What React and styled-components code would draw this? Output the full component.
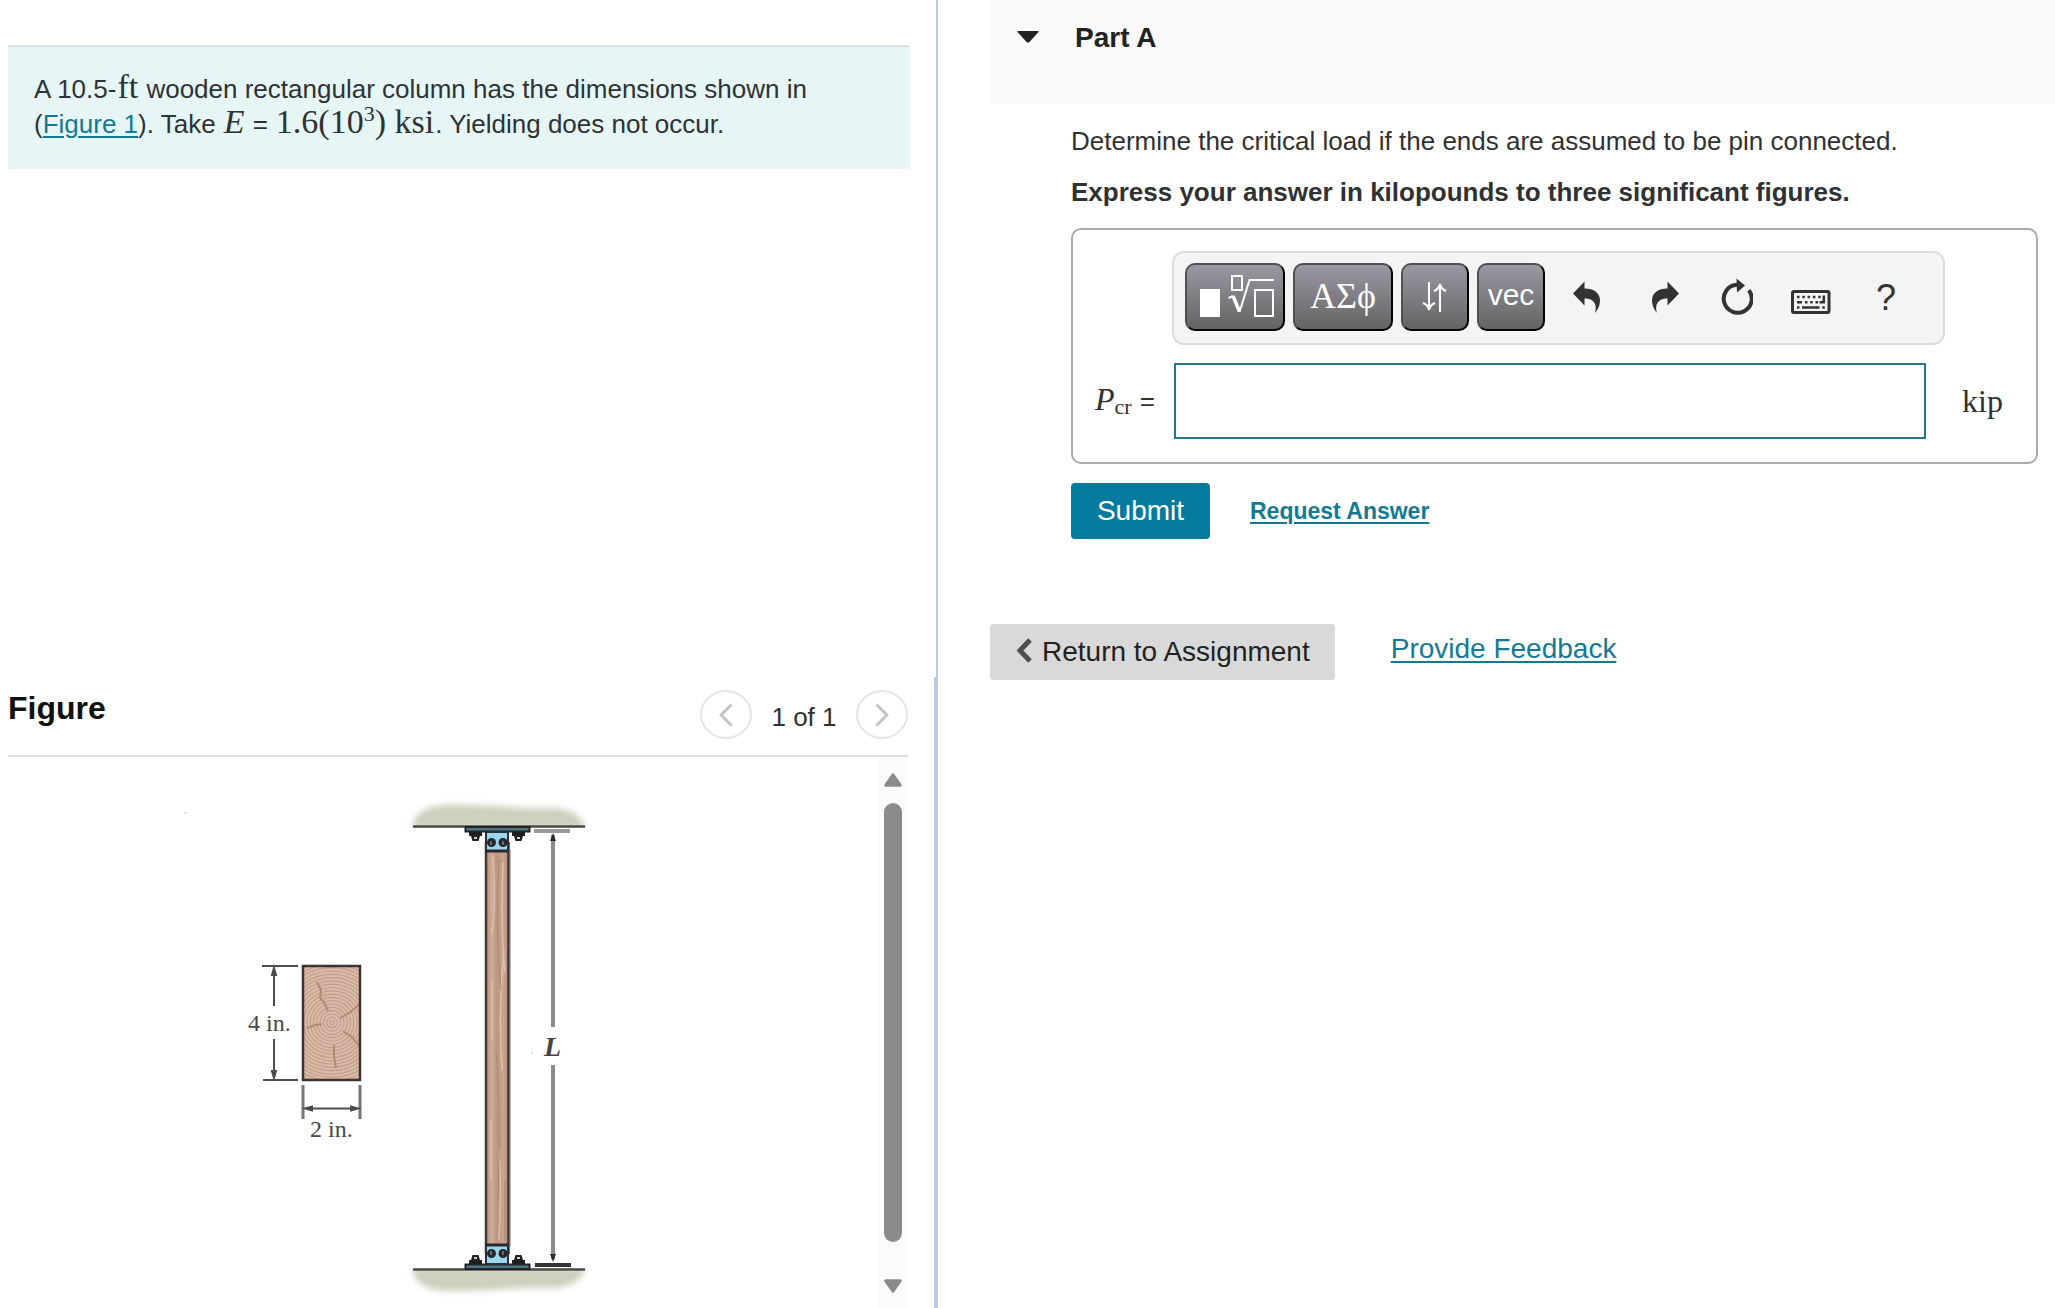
import React from "react";
import styled, { createGlobalStyle } from "styled-components";

const sans = `"Liberation Sans", Arial, Helvetica, sans-serif`;
const serif = `"Liberation Serif", "Times New Roman", serif`;

const GlobalStyle = createGlobalStyle`
  *, *::before, *::after { box-sizing: border-box; }
  body {
    margin: 0;
    background: #fff;
    color: #2f3234;
    font-family: ${sans};
    font-size: 26px;
    line-height: 35px;
  }
  p, h1, h2 { margin: 0; }
  button, input { font: inherit; color: inherit; }
  button { cursor: pointer; }
`;

const Page = styled.div`
  display: grid;
  grid-template-columns: minmax(0, 938fr) minmax(0, 1117fr);
  min-height: 100vh;
`;

const LeftPane = styled.div`
  display: grid;
  grid-template-rows: minmax(0, 677fr) minmax(0, 631fr);
  height: 100vh;
`;

const ProblemPane = styled.section`
  min-height: 0;
  padding: 45px 26px 0 8px;
  border-right: 2px solid #bccbdb;
`;

const FigurePane = styled.section`
  min-height: 0;
  display: flex;
  flex-direction: column;
  padding: 0 26px 0 8px;
  border-right: 4px solid #bccbdb;
`;

const Intro = styled.div`
  padding: 25px 80px 27px 26px;
  border-top: 2px solid #dbe0e0;
  background: #e6f6f6;
`;

const Link = styled.a`
  color: #147a94;
  font-size: ${(p) => p.$size || 26}px;
  font-weight: ${(p) => (p.$bold ? 700 : 400)};
  line-height: 32px;
  text-decoration: underline;
  text-decoration-thickness: 2px;
  text-underline-offset: 3px;
`;

const MathText = styled.span`
  margin: 0 1px;
  font-family: ${serif};
  font-size: ${(p) => (p.$large ? 34 : 32)}px;
  line-height: 0;
  white-space: nowrap;
`;

const Superscript = styled.sup`
  font-size: 22px;
  line-height: 0;
  vertical-align: 12px;
`;

const Subscript = styled.sub`
  font-size: 22px;
  line-height: 0;
  vertical-align: -4px;
`;

const Equals = styled.span`
  font-family: ${sans};
  font-size: 26px;
  margin: 0 8px;
`;

const FigureHeader = styled.header`
  display: flex;
  justify-content: space-between;
  align-items: flex-start;
  height: 80px;
  flex: none;
  padding-top: 13px;
  border-bottom: 2px solid #dddfdf;
`;

const FigureTitle = styled.h2`
  color: #111;
  font-size: 32px;
  line-height: 37px;
`;

const Pager = styled.div`
  display: flex;
  align-items: center;
`;

const PagerButton = styled.button`
  display: grid;
  place-items: center;
  width: 52px;
  height: 49px;
  padding: 0;
  border: 2px solid #e6e6e6;
  border-radius: 50%;
  background: #fff;
`;

const PagerCount = styled.span`
  padding-top: 6px;
  width: 104px;
  text-align: center;
`;

const FigureBody = styled.div`
  flex: 1;
  min-height: 0;
  display: flex;
`;

const Drawing = styled.svg`
  flex: 1;
  min-width: 0;
  height: 100%;
`;

const ScrollTrack = styled.div`
  width: 30px;
  display: flex;
  flex-direction: column;
  align-items: center;
  gap: 16px;
  padding: 16px 0 15px;
  background: #fbfbfb;
`;

const ScrollThumb = styled.div`
  flex: 1;
  width: 18px;
  margin-bottom: 21px;
  border-radius: 9px;
  background: #8b8b8b;
`;

const RightPane = styled.main`
  padding-left: 52px;
`;

const PartHeader = styled.header`
  display: flex;
  align-items: flex-start;
  gap: 36px;
  height: 104px;
  padding: 22px 0 0 27px;
  background: #f9f9f9;
`;

const CollapseButton = styled.button`
  display: flex;
  align-items: center;
  height: 30px;
  padding: 0;
  border: 0;
  background: none;
`;

const PartTitle = styled.h1`
  color: #222;
  font-size: 28px;
  line-height: 32px;
`;

const PartBody = styled.div`
  padding: 20px 17px 0 81px;
`;

const Instruction = styled.p`
  margin: 16px 0 18px;
  font-weight: 700;
`;

const AnswerBox = styled.div`
  padding: 21px 0 23px;
  border: 2px solid #aaa;
  border-radius: 10px;
`;

const Toolbar = styled.div`
  display: flex;
  align-items: center;
  margin: 0 91px 18px 99px;
  padding: 10px 11px 12px;
  border: 2px solid #dcdcdc;
  border-radius: 12px;
  background: #f4f4f4;
`;

const PaletteGroup = styled.div`
  display: flex;
  gap: 8px;
`;

const paletteKinds = {
  icon: { family: sans, size: 30, lift: 0 },
  greek: { family: serif, size: 36, lift: 2 },
  text: { family: sans, size: 30, lift: 6 },
};

const PaletteButton = styled.button`
  display: grid;
  place-items: center;
  width: ${(p) => (p.$wide ? 100 : 68)}px;
  height: 68px;
  padding: 0 0 ${(p) => paletteKinds[p.$kind].lift}px;
  border: 2px solid;
  border-color: #505050 #000 #000 #505050;
  border-radius: 10px;
  background: linear-gradient(#9a98a3, #636363);
  color: #fff;
  font-family: ${(p) => paletteKinds[p.$kind].family};
  font-size: ${(p) => paletteKinds[p.$kind].size}px;
`;

const ToolButton = styled.button`
  display: grid;
  place-items: center;
  width: ${(p) => p.$width}px;
  height: 68px;
  padding: 0;
  border: 0;
  background: none;
  color: #333;
  font-size: 36px;
`;

const AnswerRow = styled.div`
  display: flex;
  align-items: center;
  padding-right: 32px;
`;

const AnswerLabel = styled.label`
  width: 101px;
  padding-left: 21px;
  flex: none;
`;

const AnswerInput = styled.input`
  flex: 1;
  min-width: 0;
  height: 76px;
  margin-right: 35px;
  padding: 0 12px;
  border: 2px solid #22788e;
  border-radius: 0;
  background: #fff;
  outline: none;
`;

const SubmitRow = styled.div`
  display: flex;
  align-items: center;
  gap: 40px;
  margin-top: 19px;
`;

const SubmitButton = styled.button`
  width: 139px;
  height: 56px;
  padding: 0;
  border: 0;
  border-radius: 4px;
  background: #047a9c;
  color: #fff;
  font-size: 28px;
  line-height: 32px;
`;

const FooterRow = styled.footer`
  display: flex;
  align-items: flex-start;
  gap: 56px;
  margin-top: 85px;
`;

const ReturnButton = styled.button`
  display: flex;
  align-items: center;
  gap: 10px;
  height: 56px;
  padding: 0 25px 0 26px;
  border: 0;
  border-radius: 4px;
  background: #d9d9d9;
  color: #222;
  font-size: 28px;
  line-height: 32px;
`;

const FeedbackSlot = styled.div`
  padding-top: 8px;
`;

const ReturnIcon = styled.svg`
  margin-bottom: 4px;
`;

function ChevronIcon({ right }) {
  return (
    <svg width="14" height="24" viewBox="0 0 14 24" fill="none" stroke="#c4c4c4" strokeWidth="3">
      <path d={right ? "M1.5 1.5 12 12 1.5 22.5" : "M12.500 1.500 2 12l10.500 10.500"} />
    </svg>
  );
}

function ScrollArrow({ down }) {
  return (
    <svg width="18" height="14" viewBox="0 0 18 14" fill="#8b8b8b" stroke="#8b8b8b" strokeWidth="3" strokeLinejoin="round">
      <path d={down ? "M1.8 1.8h14.400L9 12.200z" : "M1.800 12.200h14.400L9 1.800z"} />
    </svg>
  );
}

function RootIcon() {
  return (
    <svg width="82" height="46" viewBox="-6 0 82 46" fill="none" stroke="#fff">
      <path d="M0 15h20v28H0z" fill="#fff" stroke="none" />
      <path d="M32 2h10v14H32z" strokeWidth="2" />
      <path d="M28.500 24l4.500-2" strokeWidth="2" />
      <path d="M33 22l6.500 15.500" strokeWidth="3.500" />
      <path d="M39.500 38 49.500 6H74" strokeWidth="2" />
      <path d="M55 16h18v26H55z" strokeWidth="2" />
    </svg>
  );
}

function ArrowsIcon() {
  return (
    <svg width="28" height="30" viewBox="0 0 28 30" fill="none" stroke="#fff" strokeWidth="2">
      <path d="M8 0v28M2 21q5 2 6 7q1-5 6-7" />
      <path d="M19 30V2M13 9q5-2 6-7q1 5 6 7" />
    </svg>
  );
}

function CurvedArrowIcon({ flip }) {
  return (
    <svg width="28" height="32" viewBox="0 0 28 32" fill="#333">
      <path
        transform={flip ? "translate(28 0) scale(-1 1)" : undefined}
        d="M0 12.500 11.500 0.500V7.500C21 7.500 27 12 27 19.500C27 24.500 25 28.500 22 32C24 25 22.500 17.500 11.500 17.500V24.500z"
      />
    </svg>
  );
}

function ResetIcon() {
  return (
    <svg width="32" height="38" viewBox="0 0 32 38">
      <path d="M27.800 12.200A14 14 0 1 1 16 6.800" fill="none" stroke="#333" strokeWidth="4" />
      <path d="M15.500 0.500 24 7.500 16 14.500z" fill="#333" />
    </svg>
  );
}

function KeyboardIcon() {
  return (
    <svg width="40" height="34" viewBox="0 0 40 34" fill="none" stroke="#333">
      <rect x="1.500" y="11.500" width="36.500" height="21" rx="1.500" strokeWidth="3" />
      <path d="M6 17h24" strokeWidth="2.500" strokeDasharray="2.500 2.800" />
      <path d="M6 22.200h5M14 22.200h2.500M19.200 22.200h2.500M24.500 22.200h2.500M28.500 22.200h5M32.800 15.500v8" strokeWidth="2.500" />
      <path d="M6 27.500h2.500M11 27.500h17.500M31.300 27.500h2.500" strokeWidth="2.500" />
    </svg>
  );
}

const rings = Array.from({ length: 20 }, (_, i) => 2 + i * 3.3);

function Support({ flip }) {
  return (
    <g transform={flip ? "translate(0 2096) scale(1 -1)" : undefined}>
      <path
        d="M412 828C414 815 422 807 445 805C480 804 520 809 555 808C572 809 582 817 586 828z"
        fill="#cfcfbd"
        filter="url(#soft)"
      />
      <path d="M400 828h200v14H400z" fill="#fff" />
      <path d="M413 826.500h172" stroke="#4a4a4a" strokeWidth="2.500" />
      <path d="M465.500 827h64v4.500h-64z" fill="#527383" stroke="#202427" strokeWidth="2" />
      <path d="M469 832h13v4h-2l-1.500 5h-6l-1.500-5h-2zM512 832h13v4h-2l-1.500 5h-6l-1.500-5h-2z" fill="#1f1f1f" />
      <path d="M474 838h3M517 838h3" stroke="#d0d0d0" strokeWidth="2" />
      <path d="M486 832h22v19h-22z" fill="#9bd6ef" stroke="#2b3034" strokeWidth="2" />
      <circle cx="491.500" cy="842.500" r="4.500" fill="#26292b" />
      <circle cx="503" cy="842.500" r="4.500" fill="#26292b" />
      <path d="M491 841v4M503 841v4" stroke="#79838a" strokeWidth="1.500" />
      <path d="M486 851h22" stroke="#29292b" strokeWidth="3" />
    </g>
  );
}

function ColumnDrawing() {
  return (
    <Drawing viewBox="8 757 870 551" preserveAspectRatio="xMinYMin meet" role="img" aria-label="Column of length L with a 4 in. by 2 in. section">
      <defs>
        <filter id="soft" x="-10%" y="-40%" width="120%" height="180%">
          <feGaussianBlur stdDeviation="3" />
        </filter>
        <linearGradient id="wood" x1="0" x2="1" y1="0" y2="0">
          <stop offset="0" stopColor="#b58f7b" />
          <stop offset="0.250" stopColor="#d0ac99" />
          <stop offset="0.500" stopColor="#bb957f" />
          <stop offset="0.800" stopColor="#c8a592" />
          <stop offset="1" stopColor="#b48d79" />
        </linearGradient>
        <clipPath id="section">
          <path d="M303 966h57v114h-57z" />
        </clipPath>
      </defs>

      <path d="M184 813h3M531 1053h2" stroke="#ddd8ce" strokeWidth="1.500" />

      <path d="M303 966h57v114h-57z" fill="#dbbaa8" />
      <g clipPath="url(#section)" fill="none" stroke="#c29d8a" strokeWidth="1.200">
        {rings.map((r) => (
          <circle key={r} cx="332" cy="1022.500" r={r} />
        ))}
        <path
          d="M317 982l4 8-1 8 4 4 4 9M340 1018l9-5 11-9M307 1028l8-3 7-1M343 1031l9 6 8 10M334 1045v11l2 12"
          stroke="#b38a74"
          strokeWidth="2"
        />
      </g>
      <path d="M303 966h57v114h-57z" fill="none" stroke="#3a3330" strokeWidth="2.500" />

      <g stroke="#4d4d4d" strokeWidth="2" fill="#3a3a3a">
        <path d="M262 966h36M263 1080h35M274 970v36M274 1039v38" />
        <path d="M303 1085v34M360 1085v34" strokeWidth="3" stroke="#777" />
        <path d="M308 1108.500h47" />
        <path d="M274 968l2 7h-4zM274 1078l2-7h-4zM305 1108.500l7-2v4zM358 1108.500l-7-2v4z" />
      </g>

      <g fill="#484848" fontFamily={serif} fontSize="24">
        <text x="248" y="1031">4 in.</text>
        <text x="310" y="1137">2 in.</text>
      </g>

      <path d="M486 852h22v393h-22z" fill="url(#wood)" />
      <path d="M493 856q3 50-1 78M503 862q-3 60 2 110M492 980v60M504 950q-6 60-2 120M491 1120v60M499 1150q3 40 0 90" stroke="#dcbfae" strokeWidth="1.500" fill="none" />
      <path d="M499 860q-4 70 2 130M496 1050q5 60 2 150M505 1180v60" stroke="#ad8670" strokeWidth="1" fill="none" />
      <path d="M486 832v432M508.500 832v432" stroke="#3f3936" strokeWidth="2.500" />
      <path d="M510.500 850v396" stroke="#bfb8b8" strokeWidth="1" />

      <Support />
      <Support flip />

      <path d="M553 835v192M553 1065v194" stroke="#8a8a8a" strokeWidth="4" />
      <path d="M534 831h36" stroke="#999" strokeWidth="4" />
      <path d="M535 1265h36" stroke="#333" strokeWidth="4" />
      <path d="M553 833l3 8h-6zM553 1262l3-8h-6z" fill="#2d2d2d" />
      <text x="544" y="1056" fill="#444" fontFamily={serif} fontSize="28" fontWeight="700" fontStyle="italic">L</text>
    </Drawing>
  );
}

export default function App() {
  return (
    <>
      <GlobalStyle />
      <Page>
        <LeftPane>
          <ProblemPane>
            <Intro>
              <p>
                A 10.5-<MathText $large>ft</MathText> wooden rectangular column has the dimensions shown in
                {" "}(<Link href="#figure">Figure 1</Link>). Take{" "}
                <MathText $large>
                  <i>E</i>
                  <Equals>=</Equals>1.6(10<Superscript>3</Superscript>) ksi
                </MathText>
                . Yielding does not occur.
              </p>
            </Intro>
          </ProblemPane>
          <FigurePane id="figure">
            <FigureHeader>
              <FigureTitle>Figure</FigureTitle>
              <Pager>
                <PagerButton type="button" aria-label="Previous figure"><ChevronIcon /></PagerButton>
                <PagerCount>1 of 1</PagerCount>
                <PagerButton type="button" aria-label="Next figure"><ChevronIcon right /></PagerButton>
              </Pager>
            </FigureHeader>
            <FigureBody>
              <ColumnDrawing />
              <ScrollTrack>
                <ScrollArrow />
                <ScrollThumb />
                <ScrollArrow down />
              </ScrollTrack>
            </FigureBody>
          </FigurePane>
        </LeftPane>

        <RightPane>
          <PartHeader>
            <CollapseButton type="button" aria-label="Collapse Part A">
              <svg width="22" height="12" viewBox="0 0 22 12" fill="#222"><path d="M0.500 0h21v1L12 11.500h-2L0.500 1z" /></svg>
            </CollapseButton>
            <PartTitle>Part A</PartTitle>
          </PartHeader>
          <PartBody>
            <p>Determine the critical load if the ends are assumed to be pin connected.</p>
            <Instruction>Express your answer in kilopounds to three significant figures.</Instruction>
            <AnswerBox>
              <Toolbar role="toolbar" aria-label="Math input">
                <PaletteGroup>
                  <PaletteButton type="button" $wide $kind="icon" aria-label="Templates"><RootIcon /></PaletteButton>
                  <PaletteButton type="button" $wide $kind="greek">ΑΣϕ</PaletteButton>
                  <PaletteButton type="button" $kind="icon" aria-label="Arrows"><ArrowsIcon /></PaletteButton>
                  <PaletteButton type="button" $kind="text">vec</PaletteButton>
                </PaletteGroup>
                <ToolButton type="button" $width={84} aria-label="Undo"><CurvedArrowIcon /></ToolButton>
                <ToolButton type="button" $width={72} aria-label="Redo"><CurvedArrowIcon flip /></ToolButton>
                <ToolButton type="button" $width={72} aria-label="Reset"><ResetIcon /></ToolButton>
                <ToolButton type="button" $width={76} aria-label="Keyboard shortcuts"><KeyboardIcon /></ToolButton>
                <ToolButton type="button" $width={74}>?</ToolButton>
              </Toolbar>
              <AnswerRow>
                <AnswerLabel htmlFor="answer">
                  <MathText><i>P</i><Subscript>cr</Subscript><Equals>=</Equals></MathText>
                </AnswerLabel>
                <AnswerInput id="answer" type="text" />
                <MathText>kip</MathText>
              </AnswerRow>
            </AnswerBox>
            <SubmitRow>
              <SubmitButton type="submit">Submit</SubmitButton>
              <Link href="#request" $size={23} $bold>Request Answer</Link>
            </SubmitRow>
          </PartBody>
          <FooterRow>
            <ReturnButton type="button">
              <ReturnIcon width="16" height="25" viewBox="0 0 16 25" fill="none" stroke="#4d4d4d" strokeWidth="5">
                <path d="M14 2 4 12.500 14 23" />
              </ReturnIcon>
              Return to Assignment
            </ReturnButton>
            <FeedbackSlot><Link href="#feedback" $size={28}>Provide Feedback</Link></FeedbackSlot>
          </FooterRow>
        </RightPane>
      </Page>
    </>
  );
}
